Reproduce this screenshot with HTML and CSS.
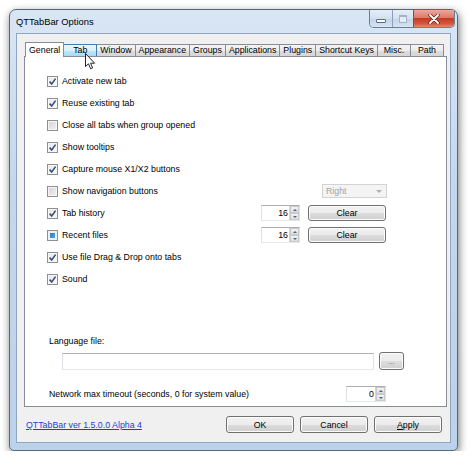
FILE: index.html
```html
<!DOCTYPE html>
<html>
<head>
    <title>QTTabBar Options</title>
    <link rel="stylesheet" href="styles.css">
</head>
<body>
    <div class="window">
        <div class="titlebar">
            <span class="title">QTTabBar Options</span>
            <div class="caption-buttons">
                <span class="cap cap-min"><i></i></span>
                <span class="cap cap-max"><i></i></span>
                <span class="cap cap-close">
                    <svg width="12" height="10" viewBox="0 0 12 10">
                        <path d="M2 1 L10 9 M10 1 L2 9" stroke="#5a2a24" stroke-width="3.4" stroke-linecap="round"/>
                        <path d="M2 1 L10 9 M10 1 L2 9" stroke="#fff" stroke-width="1.8" stroke-linecap="round"/>
                    </svg>
                </span>
            </div>
        </div>

        <div class="client">
            <div class="tabs">
                <span class="tab selected">General</span>
                <span class="tab hover">Tab</span>
                <span class="tab">Window</span>
                <span class="tab">Appearance</span>
                <span class="tab">Groups</span>
                <span class="tab">Applications</span>
                <span class="tab">Plugins</span>
                <span class="tab">Shortcut Keys</span>
                <span class="tab">Misc.</span>
                <span class="tab">Path</span>
            </div>

            <div class="panel">
                <div class="options">
                    <div class="row">
                        <label class="check"><span class="box checked"></span>Activate new tab</label>
                    </div>
                    <div class="row">
                        <label class="check"><span class="box checked"></span>Reuse existing tab</label>
                    </div>
                    <div class="row">
                        <label class="check"><span class="box"></span>Close all tabs when group opened</label>
                    </div>
                    <div class="row">
                        <label class="check"><span class="box checked"></span>Show tooltips</label>
                    </div>
                    <div class="row">
                        <label class="check"><span class="box checked"></span>Capture mouse X1/X2 buttons</label>
                    </div>
                    <div class="row">
                        <label class="check"><span class="box"></span>Show navigation buttons</label>
                        <div class="dropdown disabled">Right<span class="arrow"></span></div>
                    </div>
                    <div class="row">
                        <label class="check"><span class="box checked"></span>Tab history</label>
                        <div class="controls">
                            <div class="spin"><span class="value">16</span><span class="arrows"><i class="up"></i><i class="down"></i></span></div>
                            <button class="btn clear">Clear</button>
                        </div>
                    </div>
                    <div class="row">
                        <label class="check"><span class="box mixed"></span>Recent files</label>
                        <div class="controls">
                            <div class="spin"><span class="value">16</span><span class="arrows"><i class="up"></i><i class="down"></i></span></div>
                            <button class="btn clear">Clear</button>
                        </div>
                    </div>
                    <div class="row">
                        <label class="check"><span class="box checked"></span>Use file Drag &amp; Drop onto tabs</label>
                    </div>
                    <div class="row">
                        <label class="check"><span class="box checked"></span>Sound</label>
                    </div>
                </div>

                <div class="lang">
                    <div class="label">Language file:</div>
                    <div class="lang-input">
                        <div class="textbox"></div>
                        <button class="btn browse">...</button>
                    </div>
                </div>

                <div class="timeout">
                    <span class="label">Network max timeout (seconds, 0 for system value)</span>
                    <div class="spin"><span class="value">0</span><span class="arrows"><i class="up"></i><i class="down"></i></span></div>
                </div>
            </div>

            <div class="footer">
                <a class="version" href="#">QTTabBar ver 1.5.0.0 Alpha 4</a>
                <div class="buttons">
                    <button class="btn">OK</button>
                    <button class="btn">Cancel</button>
                    <button class="btn"><u>A</u>pply</button>
                </div>
            </div>
        </div>

        <svg class="cursor" width="12" height="18" viewBox="0 0 12 18">
            <path d="M0.5 0.5 L0.5 13.5 L3.5 10.8 L5.6 15.8 L7.6 14.9 L5.6 10.2 L9.6 10.2 Z" fill="#fff" stroke="#222" stroke-width="1" stroke-linejoin="round"/>
        </svg>
    </div>
</body>
</html>
```

FILE: styles.css
```css
body {
    margin: 0;
    background-color: #fff;
    font-family: "Liberation Sans", Arial, sans-serif;
    font-size: 8.8px;
    color: #000;
}
.window {
    position: relative;
    margin: 9px 0 0 9px;
    width: 449px;
    height: 442px;
    box-sizing: border-box;
    border: 1px solid #56667b;
    border-radius: 7px 7px 5px 5px;
    background: linear-gradient(#d9e6f4, #c3d7ed 40%, #bcd2ea);
    box-shadow: 1px 3px 9px rgba(0,0,0,0.55);
    display: flex;
    flex-direction: column;
}
.titlebar {
    height: 23px;
    display: flex;
    align-items: flex-start;
    flex-shrink: 0;
}
.title {
    margin: 6px 0 0 6px;
    font-size: 9.4px;
    line-height: 12px;
}
.caption-buttons {
    margin-left: auto;
    margin-right: 2px;
    display: flex;
    height: 17px;
    border: 1px solid #6b7c95;
    border-top: none;
    border-radius: 0 0 5px 5px;
    overflow: hidden;
}
.cap {
    display: flex;
    align-items: center;
    justify-content: center;
    background: linear-gradient(#e6eef8, #d3e0ef 50%, #c2d3e8 51%, #d6e4f3);
}
.cap-min {
    width: 22px;
    border-right: 1px solid #8f9fb6;
}
.cap-min i {
    width: 8px;
    height: 2px;
    border: 1px solid #5b6c84;
    border-radius: 1px;
    background: #fff;
    margin-top: 4px;
}
.cap-max {
    width: 20px;
    border-right: 1px solid #8a4a44;
}
.cap-max i {
    width: 6px;
    height: 5px;
    border: 1px solid #a3b2c6;
    border-top-width: 2px;
    background: #e4ecf6;
}
.cap-close {
    width: 40px;
    background: linear-gradient(#eba999, #dc7a66 45%, #c63b24 50%, #d2563f 80%, #e08a72);
}
.client {
    margin: 0 6px 7px 6px;
    flex: 1;
    border: 1px solid #8fa6c1;
    background-color: #f0f0f0;
    display: flex;
    flex-direction: column;
}
.tabs {
    display: flex;
    align-items: flex-end;
    height: 14px;
    margin: 8px 0 0 8px;
}
.tab {
    min-width: 33px;
    height: 12px;
    box-sizing: border-box;
    padding: 0 3px;
    line-height: 11px;
    text-align: center;
    white-space: nowrap;
    border: 1px solid #898c95;
    border-bottom: none;
    border-left: none;
    background: linear-gradient(#f4f4f4, #ebebeb 50%, #dddddd 51%, #d6d6d6);
}
.tab.selected {
    height: 15px;
    margin-bottom: -1px;
    padding-top: 2px;
    background: #fff;
    border-left: 1px solid #898c95;
    position: relative;
    z-index: 1;
    min-width: 38px;
}
.tab.hover {
    background: linear-gradient(#eaf6fd, #d9f0fc 50%, #bee6fd 51%, #a7d9f5);
    border-color: #3c7fb1;
}
.panel {
    margin: 0 3px 0 7px;
    height: 351px;
    box-sizing: border-box;
    border: 1px solid #898c95;
    background-color: #fff;
}
.options {
    margin-top: 13px;
    padding-left: 22px;
    width: 340px;
}
.row {
    height: 22px;
    display: flex;
    align-items: center;
    justify-content: space-between;
}
.check {
    display: flex;
    align-items: center;
    gap: 4px;
    line-height: 12px;
}
.box {
    width: 11px;
    height: 11px;
    box-sizing: border-box;
    border: 1px solid #8e8f8f;
    background: linear-gradient(135deg, #cfd2d6, #f4f4f4);
    box-shadow: inset 0 0 0 1px #f6f6f6;
}
.box.checked {
    background: linear-gradient(135deg, #e9ebee, #fbfbfb) ;
    background-image: url("data:image/svg+xml,%3Csvg xmlns='http://www.w3.org/2000/svg' width='9' height='9'%3E%3Cpath d='M1.6 4.6 L3.7 7 L7.6 1.6' fill='none' stroke='%23384d7c' stroke-width='1.6'/%3E%3C/svg%3E"), linear-gradient(135deg, #e3e6ea, #fbfbfb);
    background-repeat: no-repeat;
}
.box.mixed {
    background: linear-gradient(135deg, #2a6aa6, #5db4e0);
    box-shadow: inset 0 0 0 2px #eef0f2;
}
.dropdown {
    width: 65px;
    height: 14px;
    box-sizing: border-box;
    border: 1px solid #d3d3d3;
    background: #f4f4f4;
    padding-left: 3px;
    line-height: 12px;
    display: flex;
    align-items: center;
    justify-content: space-between;
}
.dropdown.disabled {
    color: #a3a3a3;
}
.dropdown .arrow {
    width: 0;
    height: 0;
    margin-right: 4px;
    border-left: 3px solid transparent;
    border-right: 3px solid transparent;
    border-top: 3px solid #b0b0b0;
}
.controls {
    display: flex;
    align-items: center;
    gap: 8px;
    margin-right: 1px;
}
.spin {
    width: 39px;
    height: 16px;
    box-sizing: border-box;
    border: 1px solid #abadb3;
    border-color: #abadb3 #e2e3ea #e3e9ef #dbdfe6;
    background: #fff;
    display: flex;
    align-items: stretch;
}
.spin .value {
    flex: 1;
    text-align: right;
    line-height: 14px;
    padding-right: 1px;
}
.spin .arrows {
    width: 9px;
    display: flex;
    flex-direction: column;
    border-left: 1px solid #d4d4d4;
}
.spin .arrows i {
    flex: 1;
    background: linear-gradient(#f3f3f3, #dedede);
    border: 1px solid #c9c9c9;
    display: flex;
    align-items: center;
    justify-content: center;
}
.spin .arrows i::after {
    content: "";
    border-left: 2px solid transparent;
    border-right: 2px solid transparent;
}
.spin .arrows .up::after {
    border-bottom: 2px solid #4d6185;
}
.spin .arrows .down::after {
    border-top: 2px solid #4d6185;
}
.btn {
    font-family: "Liberation Sans", Arial, sans-serif;
    font-size: 8.8px;
    color: #000;
    height: 17px;
    padding: 0;
    box-sizing: border-box;
    border: 1px solid #707070;
    border-radius: 3px;
    background: linear-gradient(#f2f2f2, #ebebeb 50%, #dddddd 51%, #cfcfcf);
    box-shadow: inset 0 0 0 1px #fcfcfc;
}
.btn.clear {
    width: 78px;
    height: 16px;
}
.lang {
    margin-top: 45px;
    padding-left: 24px;
}
.label {
    line-height: 12px;
}
.lang-input {
    display: flex;
    align-items: center;
    gap: 5px;
    margin-top: 5px;
    margin-left: 13px;
}
.textbox {
    width: 312px;
    height: 17px;
    box-sizing: border-box;
    border: 1px solid #abadb3;
    border-color: #abadb3 #e2e3ea #e3e9ef #dbdfe6;
    background: #fff;
}
.btn.browse {
    width: 25px;
    height: 18px;
    color: #555;
    font-size: 7px;
}
.timeout {
    margin-top: 16px;
    padding-left: 24px;
    width: 337px;
    display: flex;
    align-items: center;
    justify-content: space-between;
}
.timeout .spin {
    width: 40px;
}
.footer {
    flex: 1;
    display: flex;
    align-items: center;
    justify-content: space-between;
    padding: 0 8px 0 9px;
}
.version {
    color: #1f3fd2;
    text-decoration: underline;
    line-height: 12px;
}
.buttons {
    display: flex;
    gap: 6px;
}
.buttons .btn {
    width: 68px;
}
.cursor {
    position: absolute;
    left: 75px;
    top: 43px;
}
```
